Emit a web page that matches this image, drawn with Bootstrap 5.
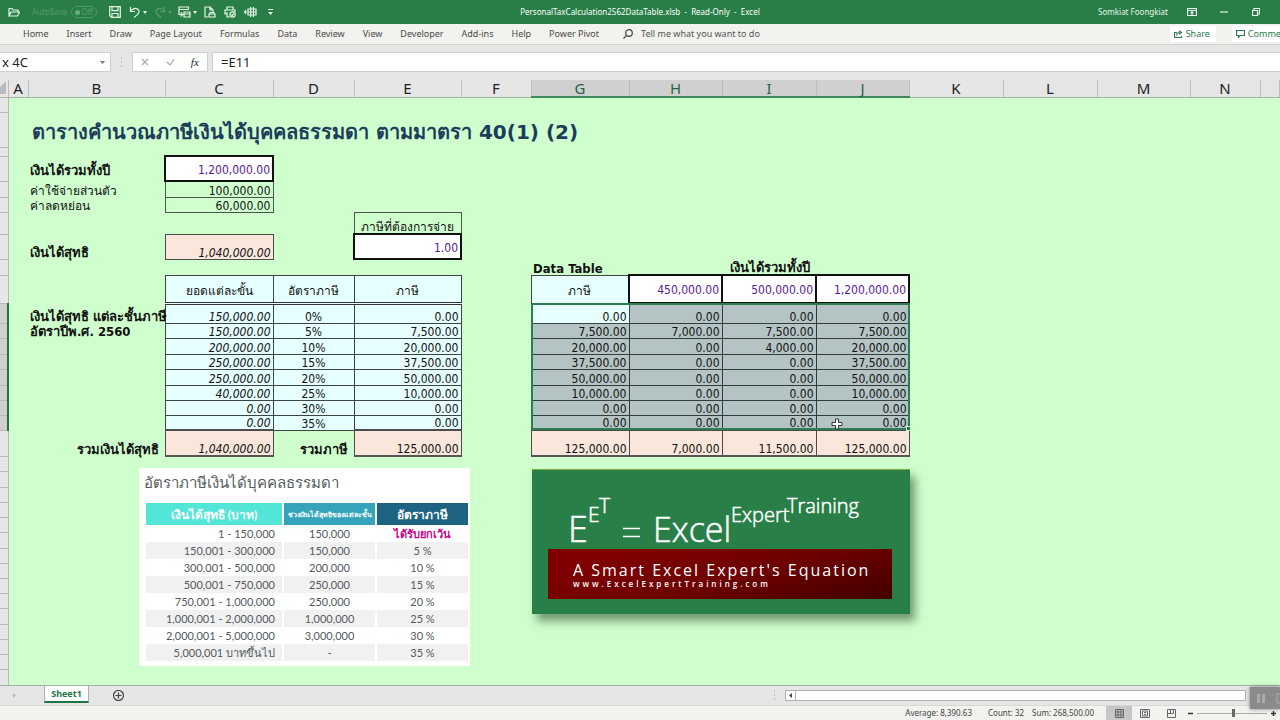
<!DOCTYPE html>
<html lang="th">
<head>
<meta charset="utf-8">
<meta name="viewport" content="width=device-width, initial-scale=1">
<title>PersonalTaxCalculation2562DataTable.xlsb - Excel</title>
<link rel="stylesheet" href="https://cdn.jsdelivr.net/npm/bootstrap@5.3.0/dist/css/bootstrap.min.css">
<script src="https://cdn.jsdelivr.net/npm/bootstrap@5.3.0/dist/js/bootstrap.bundle.min.js"></script>
<style>
  :root { --xl: #287e46; --grid: #d0ffce; --chrome: #e6e6e6; --ribbon: #f2f2ef; }
  body { font-family: "Noto Sans", "Open Sans", sans-serif; font-size: 9px; line-height: 12px; color: #444; background: var(--ribbon); overflow: hidden; }
  svg { display: block; flex: none; }
  .ico { fill: none; stroke: currentColor; stroke-width: 1.2; }
  .bare { background: none; border: 0; padding: 0; color: inherit; }

  /* title bar */
  .titlebar { background: var(--xl); height: 24px; color: #e6f5e8; font-size: 8px; white-space: nowrap; }
  .side { flex: 1 1 0; min-width: 0; }
  .qbtn { width: 20px; height: 24px; display: flex; align-items: center; justify-content: center; }
  .split { width: 25px; gap: 2px; }
  .faded { color: #5a9c72; }
  .toggle { border: 1px solid #4f966a; border-radius: 6px; height: 12px; width: 26px; line-height: 10px; padding: 0 3px; }
  .toggle i { width: 5px; height: 5px; border-radius: 50%; background: #6cab82; }
  .winbtn { width: 32px; }

  /* ribbon */
  .ribbon { height: 21px; background: var(--ribbon); border-bottom: 1px solid #d2d2d2; white-space: nowrap; overflow: hidden; }
  .ribbon a { color: #4a4a4a; text-decoration: none; }
  .tabs { gap: 18px; padding-left: 23px; }
  .tell { border: 0; background: none; padding: 0; width: 130px; font-size: 9px; color: #555; }
  .tell::placeholder { color: #555; opacity: 1; }
  .rbtn { height: 16px; background: #fff; border: 0; color: #2d7a4e; padding: 0 6px 0 4px; gap: 3px; }
  .actions { margin-right: -20px; }

  /* formula bar */
  .formula { background: var(--chrome); height: 31px; padding: 7px 0 4px; }
  .formula .field { background: #fff; border: 1px solid #cfcfcf; height: 20px; }
  .formula input { border: 0; outline: 0; background: none; font-size: 13px; color: #222; min-width: 0; padding: 0; }
  .namebox { width: 111px; border-left: 0 !important; padding: 0 5px 0 2px; }
  .fxbox { width: 76px; color: #aaa; }

  /* sheet */
  .sheetwrap { background: linear-gradient(var(--chrome) 4px, var(--grid) 4px); padding-top: 4px; position: relative; flex: 1 1 0; min-height: 0; overflow: hidden; }
  .sheet { table-layout: fixed; border-collapse: collapse; width: 100%; font-family: "DejaVu Sans Condensed", sans-serif; font-size: 12px; line-height: 12px; color: #111; }
  .sheet thead th { height: 17px; background: var(--chrome); border-right: 1px solid #bdbdbd; border-bottom: 1px solid #a5b5a5; font: 400 15px/16px "Noto Sans", sans-serif; text-align: center; padding: 0; color: #222; }
  .sheet thead th.on { background: #d0d0d0; color: #2b6245; border-bottom: 2px solid #3f8a5c; }
  .sheet tbody th { background: var(--chrome); border: solid #b9b9b9; border-width: 0 1px 1px 0; padding: 0; }
  .sheet tbody tr.on > th { background: #d0d0d0; border-right: 2px solid #217346; }
  .sheet td { padding: 0 2px; white-space: nowrap; vertical-align: bottom; text-align: right; }
  .sheet td.txt { text-align: left; }
  .sheet td.mid { text-align: center; vertical-align: middle; padding-top: 4px; }
  .sheet td.lbl { text-align: left; font-weight: 700; font-size: 13px; }
  .sheet td.lbl.align-middle { padding-top: 4px; }
  .sheet td.over { padding-left: 8px; }
  .sheet td.sum { text-align: right; font-weight: 700; padding-right: 6px; }
  .sheet td.head { font: 700 20px/24px "DejaVu Sans", sans-serif; color: #1d3c5c; text-align: left; vertical-align: middle; padding: 4px 0 0 4px; }
  .sheet .box { border: 1px solid #4a564e; }
  .sheet .cy { background: #e6ffff; border: 1px solid #3c4444; }
  .sheet .pe { background: #fae6da; border: 1px solid #4c4c4c; border-top-width: 2px; border-bottom: 2px solid #555; }
  .sheet .inp { background: #fff; border: 2px solid #111; color: #5b1a93; vertical-align: middle; padding-top: 2px; }
  .sheet .thin { border: 1px solid #4c4c4c; }
  .sheet .pct { text-align: center; }
  .sheet .dbl { border-bottom: 3px double #333; }
  .sheet .sel { background: #b4c4c4; border: 1px solid #333c3c; }
  .it { font-style: italic; }
  .r9 { height: 9px; } .r15 { height: 15px; } .r16 { height: 16px; } .r20 { height: 20px; } .r22 { height: 22px; }
  .r25 { height: 25px; } .r26 { height: 26px; } .r28 { height: 28px; } .r35 { height: 35px; }
  .selection { position: absolute; left: 531px; top: 227px; width: 379px; height: 127px; border: 2px solid #2e7d50; pointer-events: none; }
  .selection i { position: absolute; right: -3px; bottom: -3px; width: 5px; height: 5px; background: #217346; border: 1px solid #d0ffce; }
  .pointer { position: absolute; left: 831px; top: 342px; }

  /* rate card */
  .ratecard { position: absolute; left: 139px; top: 392px; width: 331px; height: 198px; background: #fff; padding: 2px 0 0 5px; color: #53595d; }
  .ratecard h2 { font: 400 15px/24px "Lato", sans-serif; margin: 0 0 9px; color: #555b60; }
  .rates { border-collapse: separate; border-spacing: 2px 0; table-layout: fixed; width: 326px; font: 11px/17px "Lato", sans-serif; }
  .rates td, .rates th { height: 17px; padding: 0; text-align: center; white-space: nowrap; }
  .rates td:first-child { text-align: right; padding-right: 7px; }
  .rates tbody tr:nth-child(even) td { background: #f1f1f1; }
  .rates th { height: 22px; color: #fff; font-weight: 700; font-size: 12px; }

  /* logo */
  .eet { position: absolute; left: 532px; top: 393px; width: 378px; height: 145px; background: #297f48; border-top: 1px solid #7fae3c; box-shadow: 5px 7px 9px rgba(50,80,50,.6); color: #fff; }
  .eet .band { margin: 0 18px 0 16px; height: 50px; background: linear-gradient(165deg, #7e0000 20%, #6e0000 55%, #420000); padding: 12px 0 0 25px; white-space: nowrap; }
  .band p { margin: 0; font: 16px/18px "Open Sans", sans-serif; letter-spacing: 2px; }
  .band p + p { font: 600 8px/10px "Open Sans", sans-serif; letter-spacing: 3px; }

  /* bottom bars */
  .tabbar { background: var(--chrome); border-top: 1px solid #9fb5a0; height: 20px; }
  .sheettab { margin-left: 26px; width: 45px; height: 17px; background: #fff; border: 1px solid #b0b0b0; border-width: 0 1px 2px; border-bottom-color: #217346; color: #217346; font-weight: 700; text-align: center; padding: 0; }
  .hscroll { width: 461px; height: 11px; border: 1px solid #b0b0b0; background: #fff; margin-right: 34px; }
  .hscroll button { width: 10px; border-right: 1px solid #b0b0b0; }
  .statusbar { background: var(--ribbon); border-top: 1px solid #d8d8d5; height: 15px; font-size: 8px; line-height: 12px; white-space: nowrap; }
  .vbtn { width: 26px; height: 14px; display: flex; align-items: center; justify-content: center; color: #666; }
  .zoombar { width: 70px; height: 14px; margin: 0; appearance: none; background: linear-gradient(#aaa, #aaa) center / 100% 1px no-repeat; }
  .zoombar::-webkit-slider-thumb { appearance: none; width: 3px; height: 8px; background: #666; }
  .pausebox { position: absolute; right: 0; bottom: 11px; width: 30px; height: 22px; background: #8b8b8b; box-shadow: 0 0 4px #777; overflow: hidden; color: #ababab; }
</style>
</head>
<body>
<div class="d-flex flex-column vh-100 position-relative overflow-hidden">

  <header class="titlebar d-flex align-items-center">
    <div class="side d-flex align-items-center">
      <button class="bare qbtn ms-1" aria-label="Open"><svg class="ico" width="12" height="12" viewBox="0 0 12 12"><path d="M1 10V2.500h3l1 1.500h5v2M1 10l2-4h8.500l-2 4z"/></svg></button>
      <label class="faded ms-2" for="autosave">AutoSave</label>
      <button id="autosave" class="bare toggle faded ms-1 d-flex align-items-center justify-content-between"><i></i>Off</button>
      <button class="bare qbtn ms-2" aria-label="Save"><svg class="ico" width="12" height="12" viewBox="0 0 12 12"><path d="M.7.700h10.600v10.600H2.500L.7 9.500zM3 .7v4h6v-4M3 11.300V7.500h6v3.800"/></svg></button>
      <button class="bare qbtn split" aria-label="Undo"><svg class="ico" width="12" height="12" viewBox="0 0 12 12"><path d="M1.500 1v4.500H6M1.700 5.300C3.500 2.500 7 1.500 9 3.500s1.500 4-4 8"/></svg><svg width="4" height="3"><path d="M0 0h4L2 3z" fill="currentColor"/></svg></button>
      <button class="bare qbtn split faded" aria-label="Redo"><svg class="ico" width="12" height="12" viewBox="0 0 12 12"><path d="M10.500 1v4.500H6M10.300 5.300C8.500 2.500 5 1.500 3 3.500s-1.500 4 4 8"/></svg><svg width="4" height="3"><path d="M0 0h4L2 3z" fill="currentColor"/></svg></button>
      <button class="bare qbtn split" aria-label="Connections"><svg class="ico" width="13" height="12" viewBox="0 0 13 12"><path d="M1 3.500V1h9.500v2.500M1 3.500h9.500M6 6h6v5H6zM6 8h6M1 3.500v5h3M2.700 6.500l2 2-2 2"/></svg><svg width="4" height="3"><path d="M0 0h4L2 3z" fill="currentColor"/></svg></button>
      <button class="bare qbtn" aria-label="Print preview"><svg class="ico" width="12" height="12" viewBox="0 0 12 12"><path d="M4 11H1V1h5l3 3v2M6 1v3h3M5 8h6v3H5zM6 8V6.500h4V8"/></svg></button>
      <button class="bare qbtn" aria-label="Quick print"><svg class="ico" width="12" height="12" viewBox="0 0 12 12"><path d="M3 4V1h6v3M3 8H1V4h10v2M3 6v5h3"/><circle cx="8.500" cy="8.500" r="2.700"/><path d="M7.300 8.500l1 1 1.500-2"/></svg></button>
      <button class="bare qbtn" aria-label="Insert cells"><svg class="ico" width="13" height="12" viewBox="0 0 13 12"><path d="M4 3h8v6H4zM4 6h8M6.700 1v10M9.500 1v10M0 6h3M2 4L.5 6 2 8"/></svg></button>
      <button class="bare qbtn" aria-label="Customize toolbar"><svg width="5" height="6"><path d="M0 0h5v1H0zM0 3h5L2.500 6z" fill="currentColor"/></svg></button>
    </div>
    <div class="text-white">PersonalTaxCalculation2562DataTable.xlsb&nbsp; -&nbsp; Read-Only&nbsp; -&nbsp; Excel</div>
    <div class="side d-flex align-items-center justify-content-end">
      <span class="me-2">Somkiat Foongkiat</span>
      <button class="bare qbtn winbtn" aria-label="Ribbon display options"><svg class="ico" width="10" height="8" viewBox="0 0 10 8"><path d="M.5.500h9v7h-9zM.5 2.500h9M5 7V4M3.500 5L5 3.800 6.500 5"/></svg></button>
      <button class="bare qbtn winbtn" aria-label="Minimize"><svg class="ico" width="8" height="8"><path d="M0 4h8"/></svg></button>
      <button class="bare qbtn winbtn me-2" aria-label="Restore"><svg class="ico" width="8" height="8" viewBox="0 0 8 8"><path d="M.5 2.500h5v5h-5zM2 2.500V.5h5.500V6h-2"/></svg></button>
    </div>
  </header>

  <nav class="ribbon d-flex align-items-center">
    <div class="tabs d-flex align-items-center">
      <a href="#">Home</a><a href="#">Insert</a><a href="#">Draw</a><a href="#">Page Layout</a><a href="#">Formulas</a><a href="#">Data</a><a href="#">Review</a><a href="#">View</a><a href="#">Developer</a><a href="#">Add-ins</a><a href="#">Help</a><a href="#">Power Pivot</a>
    </div>
    <div class="d-flex align-items-center ms-4 gap-2 flex-grow-1">
      <svg class="ico" width="10" height="10" viewBox="0 0 10 10" stroke-width="1"><circle cx="6" cy="4" r="3.300"/><path d="M3.600 6.400L.5 9.500"/></svg>
      <input class="tell" placeholder="Tell me what you want to do" aria-label="Tell me what you want to do">
    </div>
    <div class="actions d-flex flex-nowrap gap-3 flex-shrink-0">
      <button class="rbtn d-flex align-items-center"><svg class="ico" width="9" height="8" viewBox="0 0 9 8"><path d="M3 2.500H.5v5h7V6M2.500 5.500c0-2 1.500-3 3.500-3M5 .7l2.500 1.800L5 4.300"/></svg>Share</button>
      <button class="rbtn d-flex align-items-center"><svg class="ico" width="9" height="8" viewBox="0 0 9 8"><path d="M.5.500h8v5H4L2.500 7.300V5.500h-2z"/></svg>Comments</button>
    </div>
  </nav>

  <div class="formula d-flex align-items-center">
    <div class="field namebox d-flex align-items-center"><input class="flex-grow-1" value="x 4C" aria-label="Name box"><svg width="5" height="3"><path d="M0 0h5L2.500 3z" fill="#777"/></svg></div>
    <svg class="mx-2" width="5" height="10"><path d="M2 1h1M2 5h1M2 9h1" stroke="#999"/></svg>
    <div class="field fxbox d-flex align-items-center justify-content-around">
      <button class="bare" aria-label="Cancel"><svg class="ico" width="8" height="8"><path d="M1 1l6 6M7 1L1 7"/></svg></button>
      <button class="bare" aria-label="Enter"><svg class="ico" width="9" height="8"><path d="M1 4l3 3 4-6"/></svg></button>
      <button class="bare fst-italic text-dark" style="font-family:'Liberation Serif',serif;font-size:11px" aria-label="Insert function">fx</button>
    </div>
    <div class="field flex-grow-1 d-flex align-items-center ps-2 ms-1 border-end-0"><input class="w-100" value="=E11" aria-label="Formula"></div>
  </div>

  <main class="sheetwrap">
    <table class="sheet">
      <colgroup><col style="width:8px"><col style="width:20px"><col style="width:137px"><col style="width:108px"><col style="width:81px"><col style="width:107px"><col style="width:70px"><col style="width:98px"><col style="width:93px"><col style="width:94px"><col style="width:93px"><col style="width:94px"><col style="width:94px"><col style="width:93px"><col style="width:70px"><col></colgroup>
      <thead><tr><th><svg width="6" height="14"><path d="M0 13V6l6-6v13z" fill="#bbb"/></svg></th><th>A</th><th>B</th><th>C</th><th>D</th><th>E</th><th>F</th><th class="on">G</th><th class="on">H</th><th class="on">I</th><th class="on">J</th><th>K</th><th>L</th><th>M</th><th>N</th><th></th></tr></thead>
      <tbody>
        <tr class="r15"><th></th><td colspan="15"></td></tr>
        <tr class="r35"><th></th><td></td><td class="head" colspan="6">ตารางคำนวณภาษีเงินได้บุคคลธรรมดา ตามมาตรา 40(1) (2)</td><td colspan="8"></td></tr>
        <tr class="r9"><th></th><td colspan="15"></td></tr>
        <tr class="r25"><th></th><td></td><td class="lbl align-middle">เงินได้รวมทั้งปี</td><td class="inp">1,200,000.00</td><td colspan="12"></td></tr>
        <tr class="r16"><th></th><td></td><td class="txt">ค่าใช้จ่ายส่วนตัว</td><td class="box">100,000.00</td><td colspan="12"></td></tr>
        <tr class="r15"><th></th><td></td><td class="txt">ค่าลดหย่อน</td><td class="box">60,000.00</td><td colspan="12"></td></tr>
        <tr class="r22"><th></th><td colspan="4"></td><td class="box text-center">ภาษีที่ต้องการจ่าย</td><td colspan="10"></td></tr>
        <tr class="r25"><th></th><td></td><td class="lbl">เงินได้สุทธิ</td><td class="pe thin it">1,040,000.00</td><td></td><td class="inp">1.00</td><td colspan="10"></td></tr>
        <tr class="r16"><th></th><td colspan="6"></td><td class="lbl">Data Table</td><td></td><td class="lbl over">เงินได้รวมทั้งปี</td><td colspan="6"></td></tr>
        <tr class="r28"><th></th><td colspan="2"></td><td class="cy mid dbl">ยอดแต่ละขั้น</td><td class="cy mid dbl">อัตราภาษี</td><td class="cy mid dbl">ภาษี</td><td></td><td class="cy mid">ภาษี</td><td class="inp">450,000.00</td><td class="inp">500,000.00</td><td class="inp">1,200,000.00</td><td colspan="5"></td></tr>
        <tr class="r20 on"><th></th><td></td><td class="lbl">เงินได้สุทธิ แต่ละชั้นภาษี</td><td class="cy it">150,000.00</td><td class="cy pct">0%</td><td class="cy">0.00</td><td></td><td class="cy">0.00</td><td class="sel">0.00</td><td class="sel">0.00</td><td class="sel">0.00</td><td colspan="5"></td></tr>
        <tr class="r15 on"><th></th><td></td><td class="lbl">อัตราปีพ.ศ. 2560</td><td class="cy it">150,000.00</td><td class="cy pct">5%</td><td class="cy">7,500.00</td><td></td><td class="sel">7,500.00</td><td class="sel">7,000.00</td><td class="sel">7,500.00</td><td class="sel">7,500.00</td><td colspan="5"></td></tr>
        <tr class="r16 on"><th></th><td colspan="2"></td><td class="cy it">200,000.00</td><td class="cy pct">10%</td><td class="cy">20,000.00</td><td></td><td class="sel">20,000.00</td><td class="sel">0.00</td><td class="sel">4,000.00</td><td class="sel">20,000.00</td><td colspan="5"></td></tr>
        <tr class="r15 on"><th></th><td colspan="2"></td><td class="cy it">250,000.00</td><td class="cy pct">15%</td><td class="cy">37,500.00</td><td></td><td class="sel">37,500.00</td><td class="sel">0.00</td><td class="sel">0.00</td><td class="sel">37,500.00</td><td colspan="5"></td></tr>
        <tr class="r16 on"><th></th><td colspan="2"></td><td class="cy it">250,000.00</td><td class="cy pct">20%</td><td class="cy">50,000.00</td><td></td><td class="sel">50,000.00</td><td class="sel">0.00</td><td class="sel">0.00</td><td class="sel">50,000.00</td><td colspan="5"></td></tr>
        <tr class="r15 on"><th></th><td colspan="2"></td><td class="cy it">40,000.00</td><td class="cy pct">25%</td><td class="cy">10,000.00</td><td></td><td class="sel">10,000.00</td><td class="sel">0.00</td><td class="sel">0.00</td><td class="sel">10,000.00</td><td colspan="5"></td></tr>
        <tr class="r15 on"><th></th><td colspan="2"></td><td class="cy it">0.00</td><td class="cy pct">30%</td><td class="cy">0.00</td><td></td><td class="sel">0.00</td><td class="sel">0.00</td><td class="sel">0.00</td><td class="sel">0.00</td><td colspan="5"></td></tr>
        <tr class="r15 on"><th></th><td colspan="2"></td><td class="cy it">0.00</td><td class="cy pct">35%</td><td class="cy">0.00</td><td></td><td class="sel">0.00</td><td class="sel">0.00</td><td class="sel">0.00</td><td class="sel">0.00</td><td colspan="5"></td></tr>
        <tr class="r26"><th></th><td></td><td class="lbl sum">รวมเงินได้สุทธิ</td><td class="pe it">1,040,000.00</td><td class="lbl sum">รวมภาษี</td><td class="pe">125,000.00</td><td></td><td class="pe">125,000.00</td><td class="pe">7,000.00</td><td class="pe">11,500.00</td><td class="pe">125,000.00</td><td colspan="5"></td></tr>
        <tr class="r15"><th></th><td colspan="15"></td></tr><tr class="r16"><th></th><td colspan="15"></td></tr><tr class="r15"><th></th><td colspan="15"></td></tr>
        <tr class="r15"><th></th><td colspan="15"></td></tr><tr class="r15"><th></th><td colspan="15"></td></tr><tr class="r16"><th></th><td colspan="15"></td></tr>
        <tr class="r15"><th></th><td colspan="15"></td></tr><tr class="r15"><th></th><td colspan="15"></td></tr><tr class="r15"><th></th><td colspan="15"></td></tr>
        <tr class="r15"><th></th><td colspan="15"></td></tr><tr class="r16"><th></th><td colspan="15"></td></tr><tr class="r15"><th></th><td colspan="15"></td></tr>
        <tr class="r15"><th></th><td colspan="15"></td></tr><tr class="r15"><th></th><td colspan="15"></td></tr><tr class="r16"><th></th><td colspan="15"></td></tr>
      </tbody>
    </table>

    <div class="selection"><i></i></div>
    <svg class="pointer" width="12" height="12" viewBox="0 0 12 12"><path d="M4.500 1h3v3.500H11v3H7.500V11h-3V7.500H1v-3h3.500z" fill="#fff" stroke="#333"/></svg>

    <section class="ratecard">
      <h2>อัตราภาษีเงินได้บุคคลธรรมดา</h2>
      <table class="rates">
        <colgroup><col style="width:136px"><col style="width:91px"><col></colgroup>
        <thead><tr><th style="background:#52e5d8">เงินได้สุทธิ (บาท)</th><th style="background:#35a4ba;font-size:7px">ช่วงเงินได้สุทธิของแต่ละขั้น</th><th style="background:#1e6482">อัตราภาษี</th></tr></thead>
        <tbody>
          <tr><td>1 - 150,000</td><td>150,000</td><td class="fw-bold" style="color:#c4058c">ได้รับยกเว้น</td></tr>
          <tr><td>150,001 - 300,000</td><td>150,000</td><td>5 %</td></tr>
          <tr><td>300,001 - 500,000</td><td>200,000</td><td>10 %</td></tr>
          <tr><td>500,001 - 750,000</td><td>250,000</td><td>15 %</td></tr>
          <tr><td>750,001 - 1,000,000</td><td>250,000</td><td>20 %</td></tr>
          <tr><td>1,000,001 - 2,000,000</td><td>1,000,000</td><td>25 %</td></tr>
          <tr><td>2,000,001 - 5,000,000</td><td>3,000,000</td><td>30 %</td></tr>
          <tr><td>5,000,001 บาทขึ้นไป</td><td>-</td><td>35 %</td></tr>
        </tbody>
      </table>
    </section>

    <section class="eet">
      <svg width="378" height="79" viewBox="0 0 378 79" fill="#fff" stroke="#fff" stroke-width=".5" font-family="'Open Sans', sans-serif" font-weight="300">
        <text x="36" y="72" font-size="36">E</text><text x="56" y="52" font-size="21">E</text><text x="67" y="43" font-size="21">T</text>
        <path d="M91 58.500h17M91 66.500h17" stroke-width="1.500"/>
        <text x="121" y="72" font-size="34">Excel</text><text x="199" y="52" font-size="20">Expert</text><text x="255" y="43" font-size="20">Training</text>
      </svg>
      <div class="band"><p>A Smart Excel Expert's Equation</p><p>www.ExcelExpertTraining.com</p></div>
    </section>
  </main>

  <div class="tabbar d-flex align-items-start">
    <svg width="18" height="18"><path d="M13 7l3 2.500L13 12z" fill="#bbb"/></svg>
    <button class="sheettab">Sheet1</button>
    <button class="bare ms-4 mt-1" aria-label="New sheet"><svg class="ico" width="11" height="11" viewBox="0 0 11 11"><circle cx="5.500" cy="5.500" r="5"/><path d="M2.500 5.500h6M5.500 2.500v6"/></svg></button>
    <svg class="ms-auto me-2 mt-1" width="5" height="10"><path d="M2 1h1M2 5h1M2 9h1" stroke="#999"/></svg>
    <div class="hscroll mt-1 d-flex"><button class="bare d-flex align-items-center justify-content-center" aria-label="Scroll left"><svg width="3" height="5"><path d="M3 0v5L0 2.500z" fill="#444"/></svg></button></div>
  </div>

  <footer class="statusbar d-flex align-items-center justify-content-end">
    <span class="me-3">Average: 8,390.63</span><span class="me-2">Count: 32</span><span class="me-2">Sum: 268,500.00</span>
    <button class="bare vbtn ms-1" style="background:#c6c6c6" aria-label="Normal view"><svg class="ico" width="9" height="9" viewBox="0 0 9 9"><path d="M.5.500h8v8h-8zM.5 3h8M.5 6h8M3 .5v8M6 .5v8" stroke-width="1"/></svg></button>
    <button class="bare vbtn" aria-label="Page layout view"><svg class="ico" width="10" height="9" viewBox="0 0 10 9"><path d="M.5.500h9v8h-9zM2.500 2h5v5h-5zM4 3.500h2M4 5.500h2" stroke-width="1"/></svg></button>
    <button class="bare vbtn" aria-label="Page break view"><svg class="ico" width="9" height="9" viewBox="0 0 9 9"><path d="M.5.500h8v8h-8zM3.500 .5v4M.5 4.500h6v-4" stroke-width="1"/></svg></button>
    <button class="bare ms-1" aria-label="Zoom out"><svg width="5" height="5"><path d="M0 2.500h5" stroke="#333" stroke-width="1.500"/></svg></button>
    <input class="zoombar mx-1" type="range" value="52" aria-label="Zoom">
    <button class="bare me-1" aria-label="Zoom in"><svg width="5" height="5"><path d="M0 2.500h5M2.500 0v5" stroke="#333" stroke-width="1.500"/></svg></button>
  </footer>

  <button class="bare pausebox" aria-label="Pause"><svg width="30" height="22"><path d="M7 7h3v9H7zM12 7h3v9h-3z" fill="currentColor"/><path d="M27 7h8v9h-8z" fill="none" stroke="currentColor"/></svg></button>
</div>
</body>
</html>
